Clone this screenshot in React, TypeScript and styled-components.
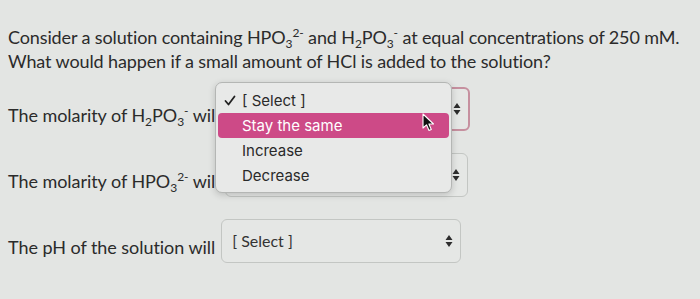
import React from "react";
import styled, { createGlobalStyle } from "styled-components";

const Global = createGlobalStyle`
  html, body { margin: 0; padding: 0; }
  body {
    background: #e3e5e3;
    font-family: Lato, "Open Sans", sans-serif;
    color: #2b2b2b;
    width: 700px;
    height: 299px;
    overflow: hidden;
  }
`;

const Page = styled.div`
  padding: 25px 0 0 8px;
`;

const Question = styled.p`
  margin: 0;
  font-size: 18px;
  line-height: 24px;
  letter-spacing: -0.12px;
`;

const Sub = styled.sub`
  font-size: 12px;
  line-height: 0;
  vertical-align: -4px;
`;

const Sup = styled.sup`
  font-size: 12px;
  line-height: 0;
  vertical-align: 7px;
`;

const Rows = styled.div`
  position: relative;
  margin-top: 14px;
  display: flex;
  flex-direction: column;
  gap: 22px;
`;

const Row = styled.div`
  display: flex;
  align-items: center;
  height: 44px;
`;

const Label = styled.span`
  font-size: 18px;
  padding-top: 12px;
  white-space: nowrap;
  letter-spacing: -0.05px;
`;

const SelectBox = styled.div<{ $focused?: boolean; $width: number }>`
  box-sizing: border-box;
  margin-left: 6px;
  width: ${(p) => p.$width}px;
  height: 44px;
  display: flex;
  align-items: center;
  justify-content: space-between;
  padding: 0 7px 0 10px;
  border-radius: 6px;
  border: ${(p) => (p.$focused ? "2px solid #c6909f" : "1px solid #c3c6c3")};
  background: #e5e7e5;
  font-size: 16px;
  color: #333;
`;

const Value = styled.span`
  margin-top: -2px;
`;

const Arrows = () => (
  <svg width="8" height="12" viewBox="0 0 8 12">
    <path d="M4 0 L7.5 5 L0.5 5 Z M4 12 L7.5 7 L0.5 7 Z" fill="#2d2d2d" />
  </svg>
);

const Menu = styled.div`
  position: absolute;
  left: 207px;
  top: -5px;
  box-sizing: border-box;
  width: 237px;
  padding: 5px 2px 4px;
  background: #e8e9e8;
  border: 1px solid #b4b6b4;
  border-radius: 7px;
  box-shadow: 0 2px 7px rgba(0, 0, 0, 0.18);
  font-family: Inter, Roboto, sans-serif;
  font-size: 15px;
`;

const Item = styled.div<{ $active?: boolean }>`
  position: relative;
  height: 25px;
  display: flex;
  align-items: center;
  padding-left: 24px;
  border-radius: 4px;
  background: ${(p) => (p.$active ? "#cd4a87" : "transparent")};
  color: ${(p) => (p.$active ? "#ffffff" : "#2a2a2a")};
`;

const Check = styled.svg`
  position: absolute;
  left: 6px;
  top: 7px;
`;

const Cursor = styled.svg`
  position: absolute;
  left: 414px;
  top: 26px;
`;

export default function App() {
  return (
    <>
      <Global />
      <Page>
        <Question>
          Consider a solution containing HPO<Sub>3</Sub>
          <Sup>2-</Sup> and H<Sub>2</Sub>PO<Sub>3</Sub>
          <Sup>-</Sup> at equal concentrations of 250 mM.
          <br />
          What would happen if a small amount of HCl is added to the solution?
        </Question>
        <Rows>
          <Row>
            <Label>
              The molarity of H<Sub>2</Sub>PO<Sub>3</Sub>
              <Sup>-</Sup> will
            </Label>
            <SelectBox $focused $width={245}>
              <span />
              <Arrows />
            </SelectBox>
          </Row>
          <Row>
            <Label>
              The molarity of HPO<Sub>3</Sub>
              <Sup>2-</Sup> will
            </Label>
            <SelectBox $width={243}>
              <span />
              <Arrows />
            </SelectBox>
          </Row>
          <Row>
            <Label>The pH of the solution will</Label>
            <SelectBox $width={240}>
              <Value>[ Select ]</Value>
              <Arrows />
            </SelectBox>
          </Row>
          <Menu>
            <Item>
              <Check width="12" height="11" viewBox="0 0 12 11">
                <path d="M1.5 6 L4.5 9.5 L10.5 1.5" stroke="#222" strokeWidth="1.8" fill="none" strokeLinecap="round" strokeLinejoin="round" />
              </Check>
              [ Select ]
            </Item>
            <Item $active>Stay the same</Item>
            <Item>Increase</Item>
            <Item>Decrease</Item>
          </Menu>
          <Cursor width="13" height="19" viewBox="0 0 13 19">
            <path d="M1 1 L1 15 L4.5 11.8 L7 17.5 L9.3 16.5 L6.9 11 L11.5 11 Z" fill="#111" stroke="#fff" strokeWidth="1.1" strokeLinejoin="round" />
          </Cursor>
        </Rows>
      </Page>
    </>
  );
}
